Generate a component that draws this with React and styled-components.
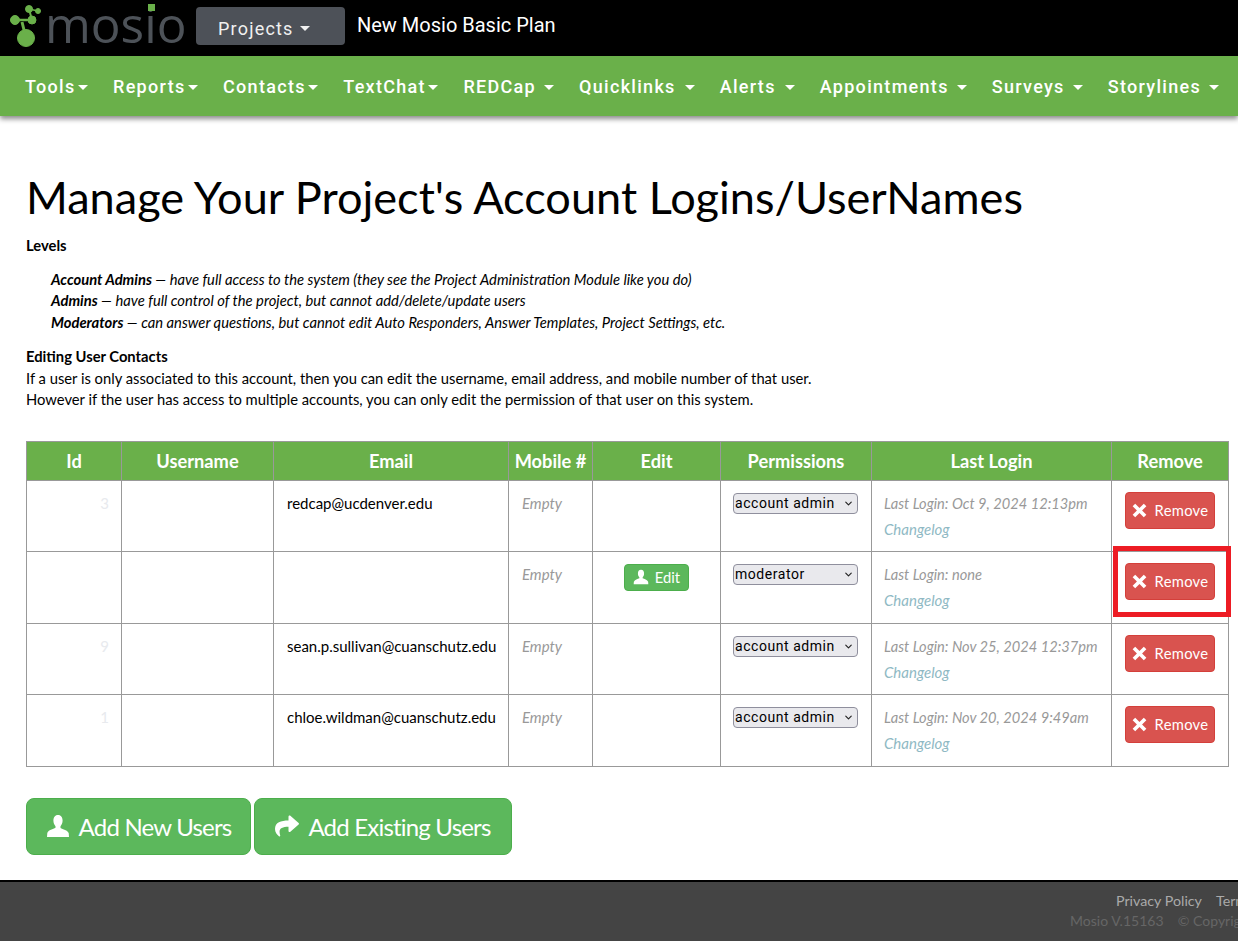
import styled, { createGlobalStyle } from "styled-components";
import { FaShare } from "react-icons/fa";
import { ChevronDown } from "lucide-react";

const GlobalStyle = createGlobalStyle`
  html, body {
    margin: 0;
    padding: 0;
    overflow: hidden;
    background: #fff;
    font-family: "Lato", "Liberation Sans", sans-serif;
    font-size: 14.75px;
    color: #000;
  }
`;

const Page = styled.div`
  width: 1238px;
  height: 941px;
  overflow: hidden;
  display: flex;
  flex-direction: column;
`;

const TopBar = styled.div`
  height: 56px;
  background: #000;
  display: flex;
  align-items: flex-start;
  flex: none;
`;

const Logo = styled.div`
  width: 196px;
  height: 56px;
  display: flex;
  align-items: flex-start;
  padding-left: 9px;
  box-sizing: border-box;
`;

const LogoWord = styled.span`
  position: relative;
  font-family: "Open Sans", sans-serif;
  font-weight: 400;
  font-size: 49.5px;
  line-height: 56px;
  color: #4d5258;
  margin-top: -4px;
`;

const LogoDot = styled.span`
  position: absolute;
  left: 103px;
  top: 8px;
  width: 7px;
  height: 7px;
  background: #6ab04a;
`;

const ProjectsButton = styled.div`
  width: 149px;
  height: 38px;
  margin-top: 7px;
  background: #4d5158;
  border-radius: 4px;
  color: #f0f0f0;
  font-family: "Roboto", sans-serif;
  font-size: 18px;
  letter-spacing: 1.2px;
  display: flex;
  align-items: center;
  padding: 4px 0 0 22px;
  box-sizing: border-box;
`;

const PlanName = styled.div`
  margin: 13px 0 0 12px;
  color: #fff;
  font-family: "Roboto", sans-serif;
  font-size: 20px;
  line-height: 24px;
`;

const Caret = styled.span`
  display: inline-block;
  width: 0;
  height: 0;
  border-left: 5px solid transparent;
  border-right: 5px solid transparent;
  border-top: 5px solid currentColor;
  margin-left: ${(props) => props.$gap}px;
  vertical-align: middle;
`;

const NavBar = styled.nav`
  height: 60px;
  flex: none;
  background: #6ab04a;
  box-shadow: 0 3px 5px rgba(0, 0, 0, 0.45);
  display: flex;
  align-items: center;
  gap: 25px;
  padding-left: 25px;
  position: relative;
`;

const NavItem = styled.a`
  color: #fff;
  font-family: "Roboto", sans-serif;
  font-weight: 500;
  font-size: 18px;
  letter-spacing: 1.3px;
  white-space: nowrap;
`;

const Main = styled.main`
  flex: 1;
  padding: 0 0 0 26px;
  position: relative;
`;

const Title = styled.h1`
  margin: 53px 0 0;
  font-weight: 400;
  font-size: 45.1px;
  line-height: 56px;
  color: #000;
  white-space: nowrap;
`;

const Strong = styled.div`
  font-weight: 700;
  line-height: 21.5px;
  margin-top: ${(props) => props.$top}px;
`;

const Levels = styled.div`
  margin: 12px 0 0 25px;
  font-style: italic;
  line-height: 21.5px;
`;

const Copy = styled.div`
  line-height: 21.5px;
`;

const UserTable = styled.table`
  margin-top: 30px;
  border-collapse: collapse;
  table-layout: fixed;
  width: 1202px;
`;

const Col = styled.col`
  width: ${(props) => props.$w}px;
`;

const Th = styled.th`
  height: 38px;
  padding: 0;
  background: #6ab04a;
  border: 1px solid #999;
  color: #fff;
  font-weight: 700;
  font-size: 18.25px;
  text-align: center;
`;

const Td = styled.td`
  height: ${(props) => props.$h}px;
  padding: 12px 12px 0;
  box-sizing: border-box;
  border: 1px solid #999;
  vertical-align: top;
  line-height: 20px;
  font-size: 15px;
  text-align: ${(props) => (props.$center ? "center" : "left")};
`;

const IdTd = styled(Td)`
  text-align: right;
  color: #e8eaee;
`;

const InsetTd = styled(Td)`
  padding-left: 13px;
`;

const LoginTd = styled(Td)`
  padding-top: 13px;
`;

const RemoveTd = styled(Td)`
  position: relative;
  padding-top: 11px;
`;

const Muted = styled.div`
  font-style: italic;
  color: #999;
  font-size: ${(props) => props.$size || 15}px;
  margin-bottom: ${(props) => props.$mb || 0}px;
`;

const ChangeLink = styled.a`
  display: block;
  font-style: italic;
  color: #8fb9c4;
`;

const SelectWrap = styled.div`
  position: relative;
  width: 125px;
  height: 21px;
  color: #222;
  svg {
    position: absolute;
    right: 4px;
    top: 5px;
    pointer-events: none;
  }
`;

const PermSelect = styled.select`
  display: block;
  appearance: none;
  width: 125px;
  height: 21px;
  padding: 0 0 0 1px;
  border: 1px solid #8f8f9d;
  border-radius: 4px;
  background-color: #e9e9ed;
  font-family: "Roboto", sans-serif;
  font-size: 14px;
  letter-spacing: 0.55px;
  color: #000;
`;

const Button = styled.a`
  display: inline-flex;
  align-items: center;
  justify-content: center;
  box-sizing: border-box;
  color: #fff;
  border-radius: 4px;
`;

const RemoveButton = styled(Button)`
  width: 90px;
  height: 37px;
  background: #d9534f;
  border: 1px solid #d43f3a;
  gap: 8px;
  font-size: 14.75px;
  letter-spacing: 0.3px;
`;

const EditButton = styled(Button)`
  width: 65px;
  height: 27px;
  background: #5cb85c;
  border: 1px solid #4cae4c;
  gap: 6px;
  font-size: 14.75px;
`;

const AddRow = styled.div`
  display: flex;
  gap: 3px;
  margin-top: 31px;
`;

const AddButton = styled(Button)`
  width: ${(props) => props.$w}px;
  height: 57px;
  background: #5cb85c;
  border: 1px solid #4cae4c;
  border-radius: 8px;
  gap: 9px;
  font-size: 24px;
  letter-spacing: -0.8px;
`;

const Highlight = styled.div`
  position: absolute;
  left: 1px;
  top: -6px;
  width: 118px;
  height: 71px;
  box-sizing: border-box;
  border: 5px solid #ed1c24;
  pointer-events: none;
`;

const Footer = styled.footer`
  height: 61px;
  flex: none;
  box-sizing: border-box;
  background: #444;
  border-top: 2px solid #000;
  padding: 9px 0 0 1070px;
  white-space: nowrap;
  font-size: 14.25px;
`;

const FooterLinks = styled.div`
  padding-left: 46px;
  color: #aaa;
  line-height: 20px;
  display: flex;
  gap: 7px;
`;

const FooterDivider = styled.span`
  width: 1px;
  background: #aaa;
`;

const FooterMeta = styled.div`
  color: #666;
  font-size: 14px;
  line-height: 20px;
`;

const UserIcon = ({ size }) => (
  <svg width={size} height={size} viewBox="0 0 24 24" fill="#fff">
    <path d="M12 1C8.800 1 7.400 3.600 7.400 6.600c0 2.400.9 4.500 2.100 5.600v1.600c-2.200 1.200-7.200 2.200-8.200 5.200L1 23h22l-.3-3.900c-1-3-6-4-8.200-5.200v-1.700c1.200-1.100 2.100-3.200 2.100-5.600C16.600 3.600 15.200 1 12 1z" />
  </svg>
);

const CrossIcon = () => (
  <svg width="15" height="15" viewBox="0 0 14 14" fill="#fff">
    <path d="M3 .6 7 4.600 11 .6l2.400 2.400-4 4 4 4-2.400 2.400-4-4-4 4L.6 11l4-4-4-4z" />
  </svg>
);

const rows = [
  { id: "3", email: "redcap@ucdenver.edu", perm: "account admin", login: "Oct 9, 2024 12:13pm", h: 71 },
  { id: "", email: "", perm: "moderator", login: "none", edit: true, flagged: true, h: 72 },
  { id: "9", email: "sean.p.sullivan@cuanschutz.edu", perm: "account admin", login: "Nov 25, 2024 12:37pm", h: 71 },
  { id: "1", email: "chloe.wildman@cuanschutz.edu", perm: "account admin", login: "Nov 20, 2024 9:49am", h: 72 },
];

const navItems = [
  ["Tools", 2.5], ["Reports", 2.5], ["Contacts", 2.5], ["TextChat", 2.5], ["REDCap", 8],
  ["Quicklinks", 9], ["Alerts", 9], ["Appointments", 8], ["Surveys", 8], ["Storylines", 8],
];

const columns = [
  ["Id", 95], ["Username", 152], ["Email", 235], ["Mobile #", 84],
  ["Edit", 128], ["Permissions", 151], ["Last Login", 240], ["Remove", 117],
];

export default function App() {
  return (
    <Page>
      <GlobalStyle />
      <TopBar>
        <Logo>
          <svg width="36" height="50" viewBox="9 0 36 50">
            <g fill="#6ab04a" stroke="#6ab04a">
              <line x1="26" y1="38" x2="22" y2="22" strokeWidth="3" />
              <line x1="15" y1="20" x2="32" y2="20" strokeWidth="2.500" />
              <line x1="29" y1="9" x2="32" y2="20" strokeWidth="2" />
              <line x1="29" y1="9" x2="38" y2="11" strokeWidth="1.500" />
              <circle cx="26" cy="38" r="8.500" />
              <circle cx="15" cy="20" r="4.500" />
              <circle cx="32" cy="20" r="4" />
              <circle cx="29" cy="9" r="3.500" />
              <circle cx="38" cy="11" r="2.500" />
            </g>
          </svg>
          <LogoWord>
            mosio
            <LogoDot />
          </LogoWord>
        </Logo>
        <ProjectsButton>
          Projects <Caret $gap={6} />
        </ProjectsButton>
        <PlanName>New Mosio Basic Plan</PlanName>
      </TopBar>

      <NavBar>
        {navItems.map(([label, gap]) => (
          <NavItem key={label}>
            {label}
            <Caret $gap={gap} />
          </NavItem>
        ))}
      </NavBar>

      <Main>
        <Title>Manage Your Project's Account Logins/UserNames</Title>
        <Strong $top={10}>Levels</Strong>
        <Levels>
          <div><b>Account Admins</b> — have full access to the system (they see the Project Administration Module like you do)</div>
          <div><b>Admins</b> — have full control of the project, but cannot add/delete/update users</div>
          <div><b>Moderators</b> — can answer questions, but cannot edit Auto Responders, Answer Templates, Project Settings, etc.</div>
        </Levels>
        <Strong $top={13}>Editing User Contacts</Strong>
        <Copy>If a user is only associated to this account, then you can edit the username, email address, and mobile number of that user.</Copy>
        <Copy>However if the user has access to multiple accounts, you can only edit the permission of that user on this system.</Copy>

        <UserTable>
          <colgroup>
            {columns.map(([label, w]) => (
              <Col key={label} $w={w} />
            ))}
          </colgroup>
          <thead>
            <tr>
              {columns.map(([label]) => (
                <Th key={label}>{label}</Th>
              ))}
            </tr>
          </thead>
          <tbody>
            {rows.map((row, i) => (
              <tr key={i}>
                <IdTd $h={row.h}>{row.id}</IdTd>
                <Td $h={row.h} />
                <InsetTd $h={row.h}>{row.email}</InsetTd>
                <InsetTd $h={row.h}>
                  <Muted>Empty</Muted>
                </InsetTd>
                <Td $h={row.h} $center>
                  {row.edit && (
                    <EditButton>
                      <UserIcon size={16} /> Edit
                    </EditButton>
                  )}
                </Td>
                <Td $h={row.h}>
                  <SelectWrap>
                    <PermSelect defaultValue={row.perm}>
                      <option>account admin</option>
                      <option>admin</option>
                      <option>moderator</option>
                    </PermSelect>
                    <ChevronDown size={11} strokeWidth={2.500} />
                  </SelectWrap>
                </Td>
                <LoginTd $h={row.h}>
                  <Muted $mb={5} $size={14.65}>Last Login: {row.login}</Muted>
                  <ChangeLink>Changelog</ChangeLink>
                </LoginTd>
                <RemoveTd $h={row.h} $center>
                  <RemoveButton>
                    <CrossIcon /> Remove
                  </RemoveButton>
                  {row.flagged && <Highlight />}
                </RemoveTd>
              </tr>
            ))}
          </tbody>
        </UserTable>

        <AddRow>
          <AddButton $w={225}>
            <UserIcon size={24} /> Add New Users
          </AddButton>
          <AddButton $w={258}>
            <FaShare size={24} /> Add Existing Users
          </AddButton>
        </AddRow>
      </Main>

      <Footer>
        <FooterLinks>
          Privacy Policy <FooterDivider /> Terms of Service
        </FooterLinks>
        <FooterMeta>Mosio V.15163 &nbsp;&nbsp; © Copyright Mosio, Inc.</FooterMeta>
      </Footer>
    </Page>
  );
}
